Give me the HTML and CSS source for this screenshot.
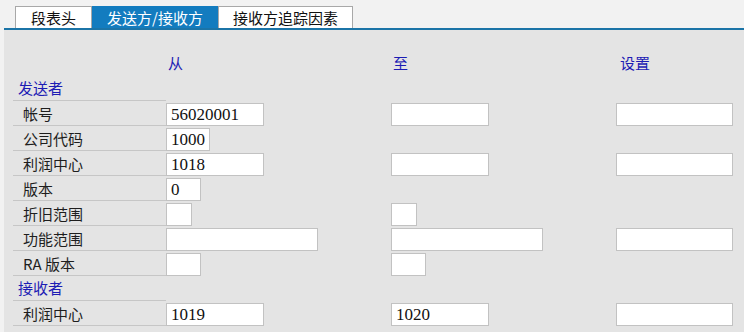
FILE: index.html
```html
<!DOCTYPE html>
<html lang="zh-CN">
<head>
    <meta charset="UTF-8">
    <title>发送方/接收方</title>
    <link rel="stylesheet" href="styles.css">
</head>
<body>
    <div class="tabs">
        <div class="tab">段表头</div>
        <div class="tab active">发送方/接收方</div>
        <div class="tab wide">接收方追踪因素</div>
    </div>
    <div class="panel">
        <div class="form">
            <div class="head"></div>
            <div class="head col">从</div>
            <div class="head col">至</div>
            <div class="head col set">设置</div>

            <div class="group">发送者</div>
            <div></div><div></div><div></div>

            <div class="label">帐号</div>
            <div class="cell"><input class="f-long" value="56020001"></div>
            <div class="cell"><input class="f-long"></div>
            <div class="cell"><input class="f-set"></div>

            <div class="label">公司代码</div>
            <div class="cell"><input class="f-short" value="1000"></div>
            <div class="cell"></div>
            <div class="cell"></div>

            <div class="label">利润中心</div>
            <div class="cell"><input class="f-long" value="1018"></div>
            <div class="cell"><input class="f-long"></div>
            <div class="cell"><input class="f-set"></div>

            <div class="label">版本</div>
            <div class="cell"><input class="f-xs" value="0"></div>
            <div class="cell"></div>
            <div class="cell"></div>

            <div class="label">折旧范围</div>
            <div class="cell"><input class="f-tiny"></div>
            <div class="cell"><input class="f-tiny"></div>
            <div class="cell"></div>

            <div class="label">功能范围</div>
            <div class="cell"><input class="f-wide"></div>
            <div class="cell"><input class="f-wide"></div>
            <div class="cell"><input class="f-set"></div>

            <div class="label">RA 版本</div>
            <div class="cell"><input class="f-xs"></div>
            <div class="cell"><input class="f-xs"></div>
            <div class="cell"></div>

            <div class="group">接收者</div>
            <div></div><div></div><div></div>

            <div class="label">利润中心</div>
            <div class="cell"><input class="f-long" value="1019"></div>
            <div class="cell"><input class="f-long" value="1020"></div>
            <div class="cell"><input class="f-set"></div>
        </div>
    </div>
</body>
</html>
```

FILE: styles.css
```css
body {
    margin: 0;
    background-color: #f2f2f2;
    font-family: "Noto Sans CJK SC", "Liberation Sans", sans-serif;
    font-size: 15px;
    color: #1e1e1e;
    height: 332px;
    overflow: hidden;
}
.tabs {
    display: flex;
    margin-left: 4px;
    padding: 6px 0 0 11px;
    border-bottom: 2px solid #1b74a7;
}
.tab {
    width: 77px;
    height: 22px;
    line-height: 22px;
    text-align: center;
    background-color: #fff;
    border: 1px solid #a8a8a8;
    border-bottom: none;
    box-sizing: border-box;
    color: #111;
}
.tab.active {
    width: 126px;
    background-color: #137cbf;
    border-color: #137cbf;
    color: #fff;
}
.tab.wide {
    width: 135px;
}
.panel {
    margin-left: 4px;
    background-color: #e4e4e4;
    height: 302px;
    padding-left: 9px;
}
.form {
    display: grid;
    grid-template-columns: 153px 225px 225px 1fr;
    grid-template-rows: 46px;
    grid-auto-rows: 25px;
}
.head {
    display: flex;
    align-items: flex-end;
    padding-bottom: 2px;
    line-height: 22px;
    color: #1c1cb4;
}
.head.col {
    padding-left: 2px;
}
.head.set {
    padding-left: 4px;
}
.group {
    padding-left: 5px;
    line-height: 23px;
    color: #1c1cb4;
    border-bottom: 1px solid #c6c6c6;
}
.label {
    padding-left: 10px;
    line-height: 25px;
    border-bottom: 1px solid #c6c6c6;
}
.cell {
    display: flex;
    align-items: flex-end;
}
.cell input {
    height: 23px;
    box-sizing: border-box;
    margin: 0;
    border: 1px solid #c2c2c2;
    background-color: #fff;
    padding: 0 4px;
    font-family: "Liberation Serif", serif;
    font-size: 17px;
    color: #111;
    outline: none;
}
.f-long { width: 98px; }
.f-short { width: 44px; }
.f-xs { width: 35px; }
.f-tiny { width: 26px; }
.f-wide { width: 152px; }
.f-set { width: 117px; }
```
